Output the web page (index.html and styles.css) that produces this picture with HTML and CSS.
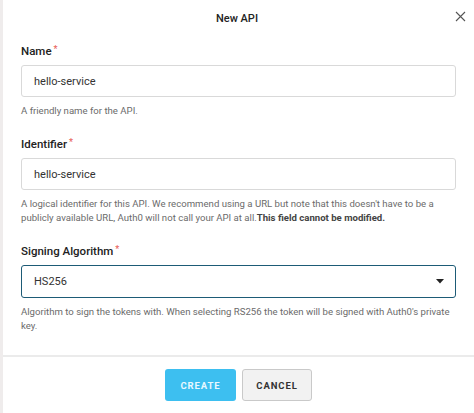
FILE: index.html
```html
<!DOCTYPE html>
<html>
<head>
<meta charset="utf-8">
<link rel="stylesheet" href="styles.css">
</head>
<body>
<div class="page">
  <div class="strip"></div>
  <div class="modal">
    <div class="header">
      <span class="title">New API</span>
      <span class="close">
        <svg width="11" height="11" viewBox="0 0 11 11"><path d="M1 1L10 10M10 1L1 10" stroke="#555" stroke-width="1.1" fill="none"/></svg>
      </span>
    </div>
    <div class="body">
      <div class="field">
        <div class="label">Name<span class="req">*</span></div>
        <div class="input">hello-service</div>
        <div class="help">A friendly name for the API.</div>
      </div>
      <div class="field">
        <div class="label">Identifier<span class="req">*</span></div>
        <div class="input">hello-service</div>
        <div class="help">A logical identifier for this API. We recommend using a URL but note that this doesn't have to be a publicly available URL, Auth0 will not call your API at all.<b>This field cannot be modified.</b></div>
      </div>
      <div class="field">
        <div class="label">Signing Algorithm<span class="req">*</span></div>
        <div class="input select">
          <span>HS256</span>
          <svg width="8" height="5" viewBox="0 0 8 5"><path d="M0 0H8L4 4.5Z" fill="#222"/></svg>
        </div>
        <div class="help">Algorithm to sign the tokens with. When selecting RS256 the token will be signed with Auth0's private key.</div>
      </div>
    </div>
    <div class="footer">
      <button class="btn primary">CREATE</button>
      <button class="btn secondary">CANCEL</button>
    </div>
  </div>
</div>
</body>
</html>
```
FILE: styles.css
```css
html, body {
  margin: 0;
  padding: 0;
  background: #fff;
}
body {
  font-family: "Roboto", "Liberation Sans", sans-serif;
  color: #333;
}
.page {
  display: flex;
  width: 474px;
  height: 413px;
  overflow: hidden;
}
.strip {
  width: 3px;
  background: #efecec;
  flex: none;
}
.modal {
  flex: 1;
  display: flex;
  flex-direction: column;
}
.header {
  height: 36px;
  position: relative;
  display: flex;
  align-items: center;
  justify-content: center;
}
.title {
  font-size: 11px;
  font-weight: 500;
  color: #222;
  margin-left: -3px;
}
.close {
  position: absolute;
  right: 8px;
  top: 11px;
  display: flex;
}
.body {
  padding: 7px 18px 22px 18px;
  display: flex;
  flex-direction: column;
  gap: 18px;
}
.field {
  display: flex;
  flex-direction: column;
}
.label {
  font-size: 11.5px;
  font-weight: 500;
  line-height: 16px;
  color: #222;
}
.req {
  color: #e8625b;
  font-size: 9px;
  margin-left: 2px;
  vertical-align: top;
  line-height: 12px;
}
.input {
  margin-top: 6px;
  height: 30px;
  border: 1px solid #d9d9d9;
  border-radius: 3px;
  box-sizing: content-box;
  padding: 0 12px;
  display: flex;
  align-items: center;
  font-size: 11px;
  color: #333;
}
.select {
  height: 31px;
  border: 1.5px solid #1d5b76;
  justify-content: space-between;
  padding: 0 11px 0 12px;
}
.help {
  margin-top: 7px;
  font-size: 9.6px;
  line-height: 14px;
  color: #6b6b6b;
}
.help b {
  font-weight: 700;
  color: #444;
}
.footer {
  border-top: 2px solid #ebebeb;
  padding-top: 12px;
  display: flex;
  justify-content: center;
  gap: 6px;
}
.btn {
  height: 32px;
  border-radius: 3px;
  font-family: "Roboto", "Liberation Sans", sans-serif;
  font-size: 9.5px;
  font-weight: 700;
  letter-spacing: 0.9px;
  padding: 0;
  cursor: pointer;
}
.primary {
  width: 71px;
  background: #3dbff0;
  color: #e8f8ff;
  border: none;
}
.secondary {
  width: 70px;
  background: #f2f2f2;
  color: #333;
  border: 1px solid #c9c9c9;
}
```
